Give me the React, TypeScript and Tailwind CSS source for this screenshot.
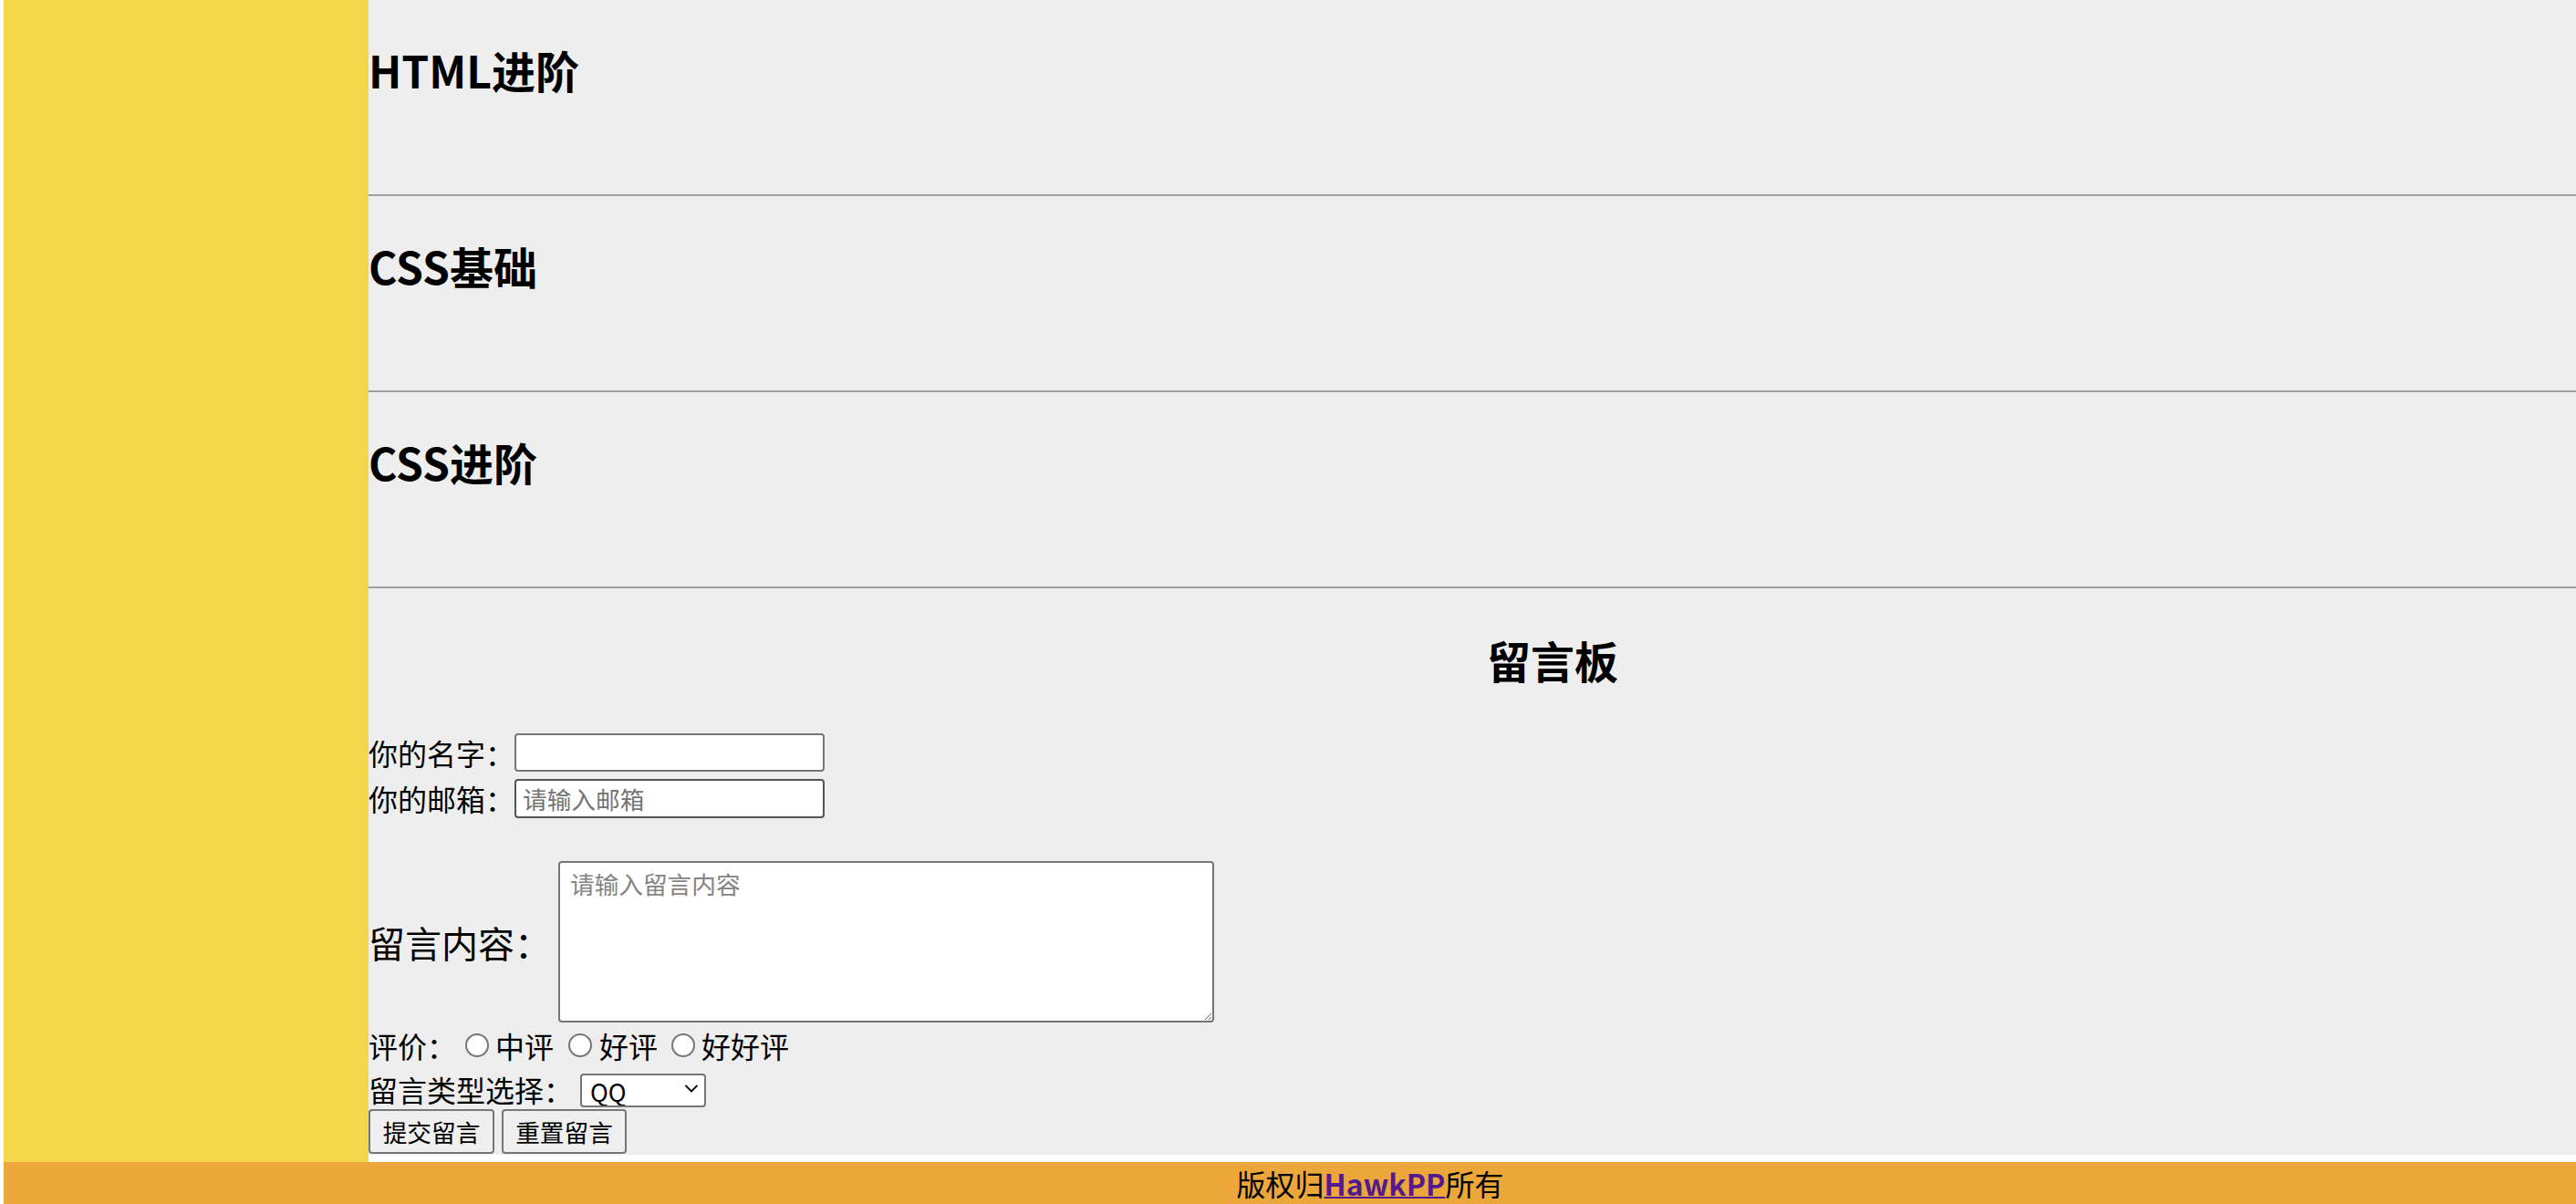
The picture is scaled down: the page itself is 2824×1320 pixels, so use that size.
export default function App() {
  const topics = ['HTML进阶', 'CSS基础', 'CSS进阶'];

  return (
    <div className="w-full h-[1320px] overflow-hidden bg-white text-black font-['Noto_Sans_CJK_SC','Noto_Sans',sans-serif]">
      <div className="w-[3000px] pl-[4px]">
        <div className="flex">
          {/* sidebar */}
          <aside className="w-[400px] shrink-0 bg-[#f4d64c]" />

          {/* main */}
          <main className="flex-1 mb-[8px] pb-[1px] bg-[#eeeeee]">
            {topics.map((t) => (
              <section key={t} className="h-[215px] border-b-2 border-[#a0a0a0]">
                <h2 className="pt-[44px] text-[48px] font-bold leading-[64px]">{t}</h2>
              </section>
            ))}

            <form className="text-[32px]" onSubmit={(e) => e.preventDefault()}>
              <h2 className="pt-[46px] pb-[45px] text-center text-[48px] font-bold leading-[64px]">留言板</h2>

              <div className="flex items-center h-[50px]">
                <label className="leading-[40px]">你的名字：</label>
                <input
                  type="text"
                  className="w-[340px] h-[42px] bg-white border-2 border-[#767676] rounded-[4px] px-[7px] text-[26.67px] outline-none"
                />
              </div>
              <div className="flex items-center h-[50px]">
                <label className="leading-[40px]">你的邮箱：</label>
                <input
                  type="email"
                  placeholder="请输入邮箱"
                  className="w-[340px] h-[43px] bg-white border-2 border-[#545454] rounded-[4px] px-[7px] text-[26.67px] placeholder:text-[#757575] outline-none"
                />
              </div>

              <div className="flex items-center pt-[44px]">
                <label className="text-[40px] leading-[52px]">留言内容：</label>
                <textarea
                  placeholder="请输入留言内容"
                  className="ml-[8px] w-[719px] h-[177px] bg-white border-2 border-[#767676] rounded-[4px] pl-[11px] pt-[5px] text-[26.67px] leading-[36px] placeholder:text-[#848484] outline-none"
                />
              </div>

              <div className="flex items-center h-[50px] leading-[40px]">
                <span>评价：</span>
                <input type="radio" name="rate" className="appearance-none ml-[10px] w-[26px] h-[26px] rounded-full border-2 border-[#767676] bg-white" />
                <span className="ml-[7px]">中评</span>
                <input type="radio" name="rate" className="appearance-none ml-[16px] w-[26px] h-[26px] rounded-full border-2 border-[#767676] bg-white" />
                <span className="ml-[8px]">好评</span>
                <input type="radio" name="rate" className="appearance-none ml-[15px] w-[26px] h-[26px] rounded-full border-2 border-[#767676] bg-white" />
                <span className="ml-[7px]">好好评</span>
              </div>

              <div className="flex items-center h-[45px] leading-[40px]">
                <span>留言类型选择：</span>
                <div className="relative ml-[8px] self-end mb-[2px]">
                  <select className="appearance-none w-[138px] h-[37px] bg-white border-2 border-[#767676] rounded-[4px] pl-[9px] pt-[2px] text-[26.67px] leading-[31px] outline-none">
                    <option>QQ</option>
                    <option>微信</option>
                    <option>邮件</option>
                  </select>
                  <svg
                    className="absolute right-[8px] top-[15px] pointer-events-none"
                    width="16"
                    height="9"
                    viewBox="0 0 16 9"
                    fill="none"
                    stroke="#000"
                    strokeWidth="1.8"
                  >
                    <path d="M1.5 1l6.5 6.5 6.5-6.5" />
                  </svg>
                </div>
              </div>

              <div className="flex h-[49px]">
                <button type="submit" className="w-[138px] h-[49px] bg-[#efefef] border-2 border-[#767676] rounded-[4px] text-[26.67px]">
                  提交留言
                </button>
                <button type="reset" className="ml-[8px] w-[137px] h-[49px] bg-[#efefef] border-2 border-[#767676] rounded-[4px] text-[26.67px]">
                  重置留言
                </button>
              </div>
            </form>
          </main>
        </div>

        {/* footer */}
        <footer className="bg-[#eca73a] text-center text-[32px] leading-[46px]">
          版权归
          <a href="#" className="font-bold text-[#551a8b] underline decoration-2">HawkPP</a>
          所有
        </footer>
      </div>
    </div>
  );
}
